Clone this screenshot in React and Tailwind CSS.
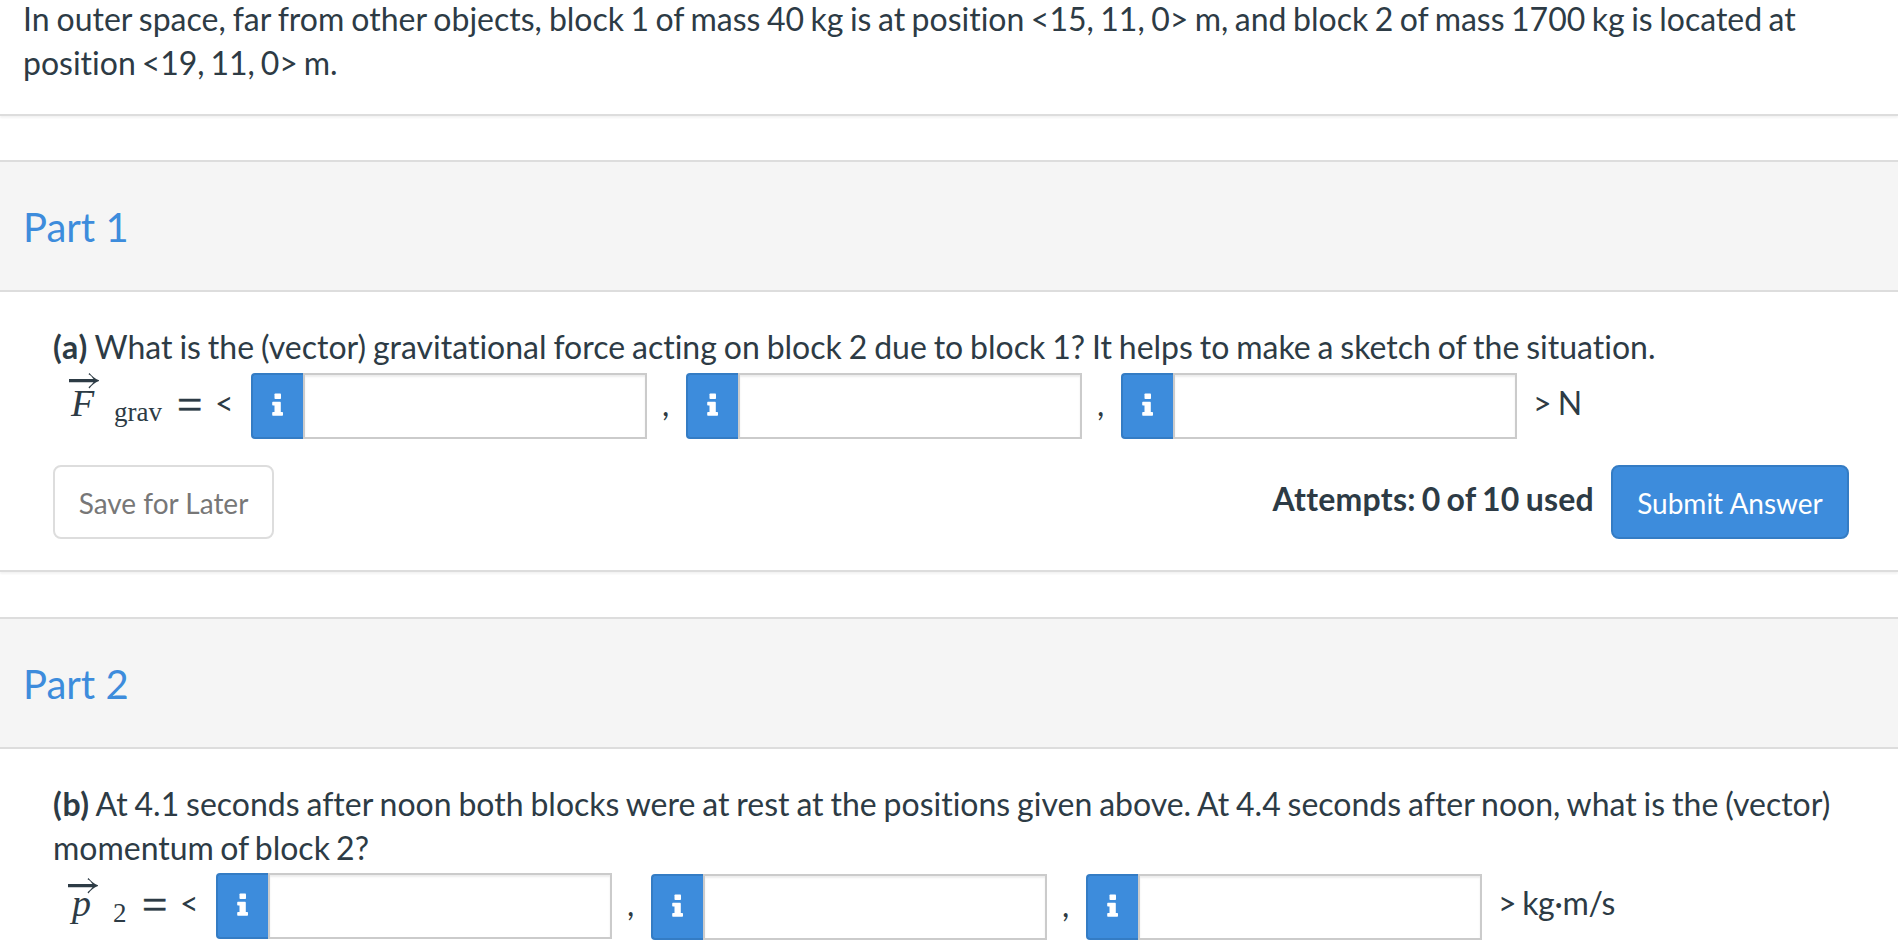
import React from "react";

const InfoIcon = () => (
  <svg width="12" height="24" viewBox="0 0 12 24" fill="currentColor">
    <rect x="2.5" y="0.5" width="6.5" height="5.5" rx="0.8" />
    <path d="M1.2 8.7h6.6c.6 0 1 .4 1 1V19h1.2c.6 0 1 .4 1 1v1.8c0 .6-.4 1-1 1H1.2c-.6 0-1-.4-1-1V20c0-.6.4-1 1-1h1.3v-6.500H1.200c-.6 0-1-.4-1-1V9.700c0-.6.4-1 1-1z" />
  </svg>
);

const VectorArrow = () => (
  <svg
    width="30"
    height="16"
    viewBox="0 0 30 16"
    fill="currentColor"
    className="absolute left-0 top-0"
  >
    <path d="M0 6.100h24.500C23.500 4.500 22 2.500 19.500 1.200l.9-1.200C23 3 26 6.200 30 7.300v.8C26 9.500 23 12 20.400 15.400l-.9-1.200c2.500-1.700 4-3.500 5-4.900H0z" />
  </svg>
);

const AnswerInput = () => (
  <div className="flex h-[66px] w-[396px] shrink-0">
    <div className="flex w-[52px] items-center justify-center rounded-l-[4px] border-y-2 border-l-2 border-[#347cc4] bg-[#3d8cdc] pb-[3px] text-white">
      <InfoIcon />
    </div>
    <input
      type="text"
      className="min-w-0 flex-1 border-2 border-[#cbcbcb] bg-white px-3 text-[28px] shadow-[inset_0_2px_2px_rgba(0,0,0,0.075)] outline-none"
    />
  </div>
);

const Comma = () => (
  <span className="w-[39px] shrink-0 pl-[15px] pt-[9px] leading-[44px]">,</span>
);

const PartHeader = ({ title }) => (
  <div className="flex h-[132px] items-center border-y-2 border-[#dddddd] bg-[#f5f5f5] px-6">
    <h2 className="-ml-px pt-[2px] text-[40px] leading-[44px] text-[#3d8cdc] [word-spacing:0px]">
      {title}
    </h2>
  </div>
);

const App = () => {
  return (
    <div className="h-[946px] w-full overflow-hidden bg-white font-['Lato',sans-serif] text-[32px] leading-[44px] text-[#2d3b45] [font-variant-ligatures:none] [word-spacing:-1px]">
      <div className="flow-root h-[116px] border-b-2 border-[#dddddd] px-[23px] shadow-[0_2px_2px_rgba(0,0,0,0.05)]">
        <p className="-mt-[3px]">
          <span className="[word-spacing:-1.2px]">
            In outer space, far from other objects,{" "}
          </span>
          <span className="[word-spacing:-1.7px]">
            block 1 of mass 40 kg is at position &lt;15, 11, 0&gt; m, and block
            2 of mass 1700 kg is located at
          </span>
          <br />
          <span className="[word-spacing:-2.300px]">
            position &lt;19, 11, 0&gt; m.
          </span>
        </p>
      </div>

      <div className="mt-[44px] h-[412px] border-b-2 border-[#dddddd] shadow-[0_2px_2px_rgba(0,0,0,0.05)]">
        <PartHeader title="Part 1" />
        <div className="pl-[53px] pr-[49px] pt-[33px]">
          <p className="[word-spacing:-1.3px]">
            <b className="tracking-[0.8px]">(a)</b> What is the (vector)
            gravitational force acting on block 2 due to block 1? It helps to
            make a sketch of the situation.
          </p>
          <div className="mt-[4px] flex h-[66px]">
            <div className="flex w-[198px] shrink-0">
              <div className="relative ml-[16px] w-[45px] font-['Liberation_Serif',serif]">
                <VectorArrow />
                <span className="block pl-[2px] pt-[8px] text-[38px] italic">
                  F
                </span>
              </div>
              <span className="w-[63px] pt-[17px] font-['Liberation_Serif',serif] text-[27px]">
                grav
              </span>
              <span className="w-[38px] pt-[9px] font-['Liberation_Serif',serif] text-[45px] [-webkit-text-stroke:0.6px_currentColor]">
                =
              </span>
              <span className="pt-[8px]">&lt;</span>
            </div>
            <AnswerInput />
            <Comma />
            <AnswerInput />
            <Comma />
            <AnswerInput />
            <span className="pl-[16px] pt-[8px] [word-spacing:-2px]">
              &gt; N
            </span>
          </div>
          <div className="mt-[26px] flex h-[74px] items-center">
            <button className="h-[74px] w-[221px] rounded-[8px] border-2 border-[#dddddd] bg-white pb-px pt-[2px] text-[28px] text-[#777777]">
              Save for Later
            </button>
            <b className="ml-auto mr-[17px] pb-[6px] tracking-[0.25px] [word-spacing:-2px]">
              Attempts: 0 of 10 used
            </b>
            <button className="h-[74px] w-[238px] rounded-[8px] border-2 border-[#347cc4] bg-[#3d8cdc] pb-px pt-[2px] text-[28px] text-white">
              Submit Answer
            </button>
          </div>
        </div>
      </div>

      <div className="mt-[45px]">
        <PartHeader title="Part 2" />
        <div className="pl-[53px] pr-[49px] pt-[33px]">
          <p className="[word-spacing:-1.300px]">
            <b className="tracking-[0.6px]">(b)</b> At 4.1 seconds after noon
            both blocks were at rest at the positions given above. At 4.4
            seconds after noon, what is the (vector)
            <br />
            <span className="[word-spacing:-2px]">momentum of block 2?</span>
          </p>
          <div className="mt-[3px] flex h-[67px]">
            <div className="flex w-[163px] shrink-0">
              <div className="relative mt-[5px] ml-[15px] w-[45px] font-['Liberation_Serif',serif]">
                <VectorArrow />
                <span className="block pl-[4px] pt-[3px] text-[38px] italic">
                  p
                </span>
              </div>
              <span className="w-[29px] pt-[18px] font-['Liberation_Serif',serif] text-[27px]">
                2
              </span>
              <span className="w-[38px] pt-[9px] font-['Liberation_Serif',serif] text-[45px] [-webkit-text-stroke:0.6px_currentColor]">
                =
              </span>
              <span className="pt-[8px]">&lt;</span>
            </div>
            <AnswerInput />
            <Comma />
            <div className="flex pt-px">
              <AnswerInput />
              <Comma />
              <AnswerInput />
            </div>
            <span className="pl-[16px] pt-[8px] tracking-[-0.3px] [word-spacing:-2px]">
              &gt; kg·m/s
            </span>
          </div>
        </div>
      </div>
    </div>
  );
};

export default App;
